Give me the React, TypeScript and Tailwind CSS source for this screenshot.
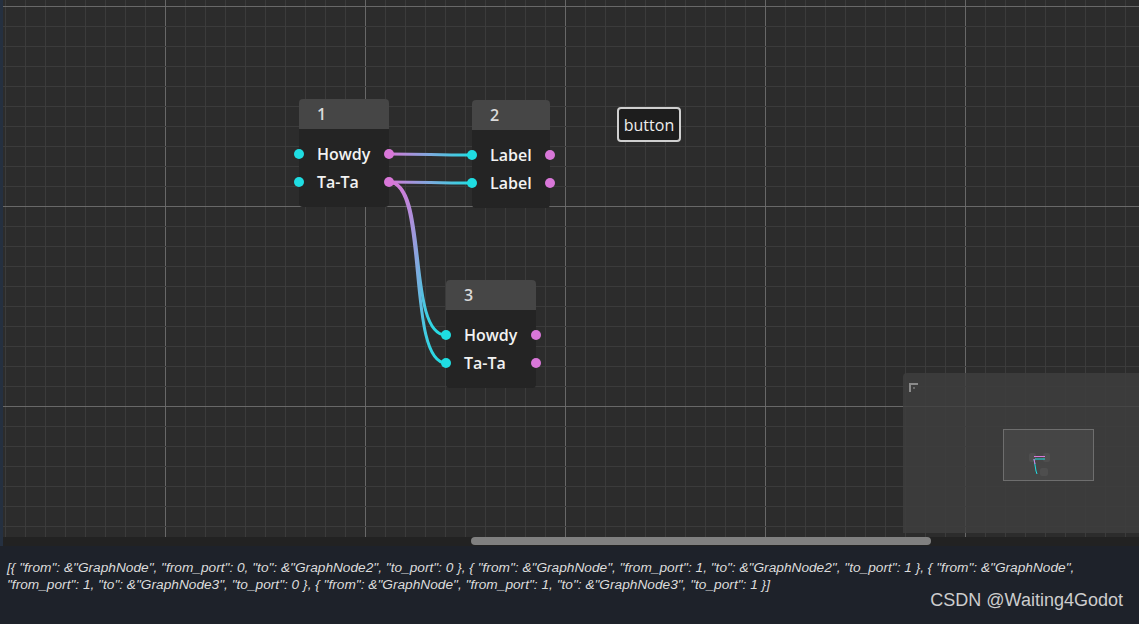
import React from 'react';

const CANVAS_W = 1136;
const CANVAS_H = 537;

type Node = {
    id: string;
    title: string;
    x: number;
    y: number;
    w: number;
    rows: string[];
};

const nodes: Node[] = [
    { id: 'n1', title: '1', x: 296, y: 99, w: 90, rows: ['Howdy', 'Ta-Ta'] },
    { id: 'n2', title: '2', x: 469, y: 100, w: 78, rows: ['Label', 'Label'] },
    { id: 'n3', title: '3', x: 443, y: 280, w: 90, rows: ['Howdy', 'Ta-Ta'] },
];

// port centre = node top + header(30) + padding(11) + row*28 + 14
const portY = (n: Node, row: number) => n.y + 30 + 11 + row * 28 + 14;

const wires = [
    { from: [0, 0], to: [1, 0] },
    { from: [0, 1], to: [1, 1] },
    { from: [0, 1], to: [2, 0] },
    { from: [0, 1], to: [2, 1] },
];

function Grid() {
    const v: number[] = [];
    for (let x = 2; x < CANVAS_W; x += 20) v.push(x);
    const h: number[] = [];
    for (let y = 6; y < CANVAS_H; y += 20) h.push(y);
    return (
        <svg className="absolute inset-0" width={CANVAS_W} height={CANVAS_H}>
            {v.map((x) => (
                <line
                    key={'v' + x}
                    x1={x + 0.5}
                    x2={x + 0.5}
                    y1={0}
                    y2={CANVAS_H}
                    stroke={(x - 162) % 200 === 0 ? '#686868' : '#3b3b3b'}
                    strokeWidth={1}
                />
            ))}
            {h.map((y) => (
                <line
                    key={'h' + y}
                    y1={y + 0.5}
                    y2={y + 0.5}
                    x1={0}
                    x2={CANVAS_W}
                    stroke={(y - 6) % 200 === 0 ? '#686868' : '#3b3b3b'}
                    strokeWidth={1}
                />
            ))}
        </svg>
    );
}

function Wires() {
    const ends = wires.map((w) => {
        const a = nodes[w.from[0]];
        const b = nodes[w.to[0]];
        return {
            x1: a.x + a.w,
            y1: portY(a, w.from[1]),
            x2: b.x,
            y2: portY(b, w.to[1]),
        };
    });
    return (
        <svg className="absolute inset-0" width={CANVAS_W} height={CANVAS_H}>
            <defs>
                {ends.map((e, i) => (
                    <linearGradient
                        key={i}
                        id={'wg' + i}
                        gradientUnits="userSpaceOnUse"
                        x1={e.x1}
                        y1={e.y1}
                        x2={e.x2}
                        y2={e.y2}
                    >
                        <stop offset="0" stopColor="#d779d9" />
                        <stop offset="1" stopColor="#22dde3" />
                    </linearGradient>
                ))}
            </defs>
            {ends.map((e, i) => {
                const c = 40;
                return (
                    <path
                        key={i}
                        d={`M${e.x1} ${e.y1} C${e.x1 + c} ${e.y1} ${e.x2 - c} ${e.y2} ${e.x2} ${e.y2}`}
                        fill="none"
                        stroke={`url(#wg${i})`}
                        strokeWidth={3}
                        strokeLinecap="round"
                    />
                );
            })}
        </svg>
    );
}

function GraphNode({ node }: { node: Node }) {
    return (
        <div
            className="absolute"
            style={{ left: node.x, top: node.y, width: node.w }}
        >
            <div className="h-[30px] rounded-t-[4px] bg-[#464646] pl-[18px] flex items-center text-[16px] text-[#dadada]">
                {node.title}
            </div>
            <div className="rounded-b-[4px] bg-[#242424] py-[11px]">
                {node.rows.map((r, i) => (
                    <div key={i} className="relative h-[28px] flex items-center pl-[18px] text-[16px] text-[#f2f2f2]">
                        {r}
                        <span className="absolute left-[-5px] top-[9px] h-[10px] w-[10px] rounded-full bg-[#1fdde2]" />
                        <span className="absolute right-[-5px] top-[9px] h-[10px] w-[10px] rounded-full bg-[#d977d9]" />
                    </div>
                ))}
            </div>
        </div>
    );
}

function Minimap() {
    return (
        <div className="absolute left-[900px] top-[373px] right-0 h-[160px] rounded-tl-[4px] bg-[rgba(62,62,62,0.82)]">
            <svg className="absolute left-[6px] top-[10px]" width="10" height="10" viewBox="0 0 10 10">
                <path d="M0 0H9V2H2V9H0Z" fill="#8a8a8a" />
                <rect x="4" y="4" width="2" height="2" fill="#6a6a6a" />
            </svg>
            <div className="absolute left-[100px] top-[56px] w-[91px] h-[52px] border border-[#6e6e6e] bg-[rgba(90,90,90,0.35)]" />
            <svg className="absolute left-[120px] top-[70px]" width="40" height="36">
                <rect x="6" y="10" width="7" height="9" rx="2" fill="#4e4e4e" />
                <rect x="20" y="10" width="7" height="9" rx="2" fill="#4e4e4e" />
                <rect x="17" y="25" width="8" height="8" rx="2" fill="#4e4e4e" />
                <line x1="11" y1="13.5" x2="22" y2="13.5" stroke="#d779d9" strokeWidth="1" />
                <line x1="12" y1="16" x2="22" y2="16" stroke="#22dde3" strokeWidth="1" />
                <path d="M11 16 L13 28 L14 31" stroke="#22dde3" strokeWidth="1" fill="none" />
                <path d="M11 16 L12 21" stroke="#d779d9" strokeWidth="1" fill="none" />
            </svg>
        </div>
    );
}

export default function App() {
    return (
        <div
            className="w-[1139px] h-[624px] flex flex-col overflow-hidden bg-[#1e222a]"
            style={{ fontFamily: '"Open Sans", "Noto Sans", sans-serif' }}
        >
            <div className="flex h-[546px]">
                <div className="w-[3px] bg-[#253040]" />
                <div className="flex-1 flex flex-col">
                    <div className="relative h-[537px] overflow-hidden bg-[#2c2c2c] font-semibold">
                        <Grid />
                        <Wires />
                        {nodes.map((n) => (
                            <GraphNode key={n.id} node={n} />
                        ))}
                        <div className="absolute left-[614px] top-[107px] w-[64px] h-[35px] rounded-[4px] border-2 border-[#cfcfcf] bg-[#1d1d1d] flex items-center justify-center text-[16px] text-[#eeeeee] font-normal">
                            button
                        </div>
                        <Minimap />
                    </div>
                    <div className="h-[9px] bg-[#222222]">
                        <div className="ml-[468px] w-[460px] h-[8px] rounded-full bg-[#808080]" />
                    </div>
                </div>
            </div>
            <div
                className="relative flex-1 px-[7px] pt-[13px] text-[13.7px] leading-[17px] italic text-[#dcdcdc]"
                style={{ fontFamily: '"Liberation Sans", sans-serif' }}
            >
                <div className="whitespace-nowrap">
                    [{'{'} "from": &amp;"GraphNode", "from_port": 0, "to": &amp;"GraphNode2", "to_port": 0 {'}'}, {'{'} "from": &amp;"GraphNode", "from_port": 1, "to": &amp;"GraphNode2", "to_port": 1 {'}'}, {'{'} "from": &amp;"GraphNode",
                </div>
                <div className="whitespace-nowrap">
                    "from_port": 1, "to": &amp;"GraphNode3", "to_port": 0 {'}'}, {'{'} "from": &amp;"GraphNode", "from_port": 1, "to": &amp;"GraphNode3", "to_port": 1 {'}'}]
                </div>
                <div className="absolute right-[16px] top-[46px] text-[18px] not-italic text-[#cdcdcd]">
                    CSDN @Waiting4Godot
                </div>
            </div>
        </div>
    );
}
